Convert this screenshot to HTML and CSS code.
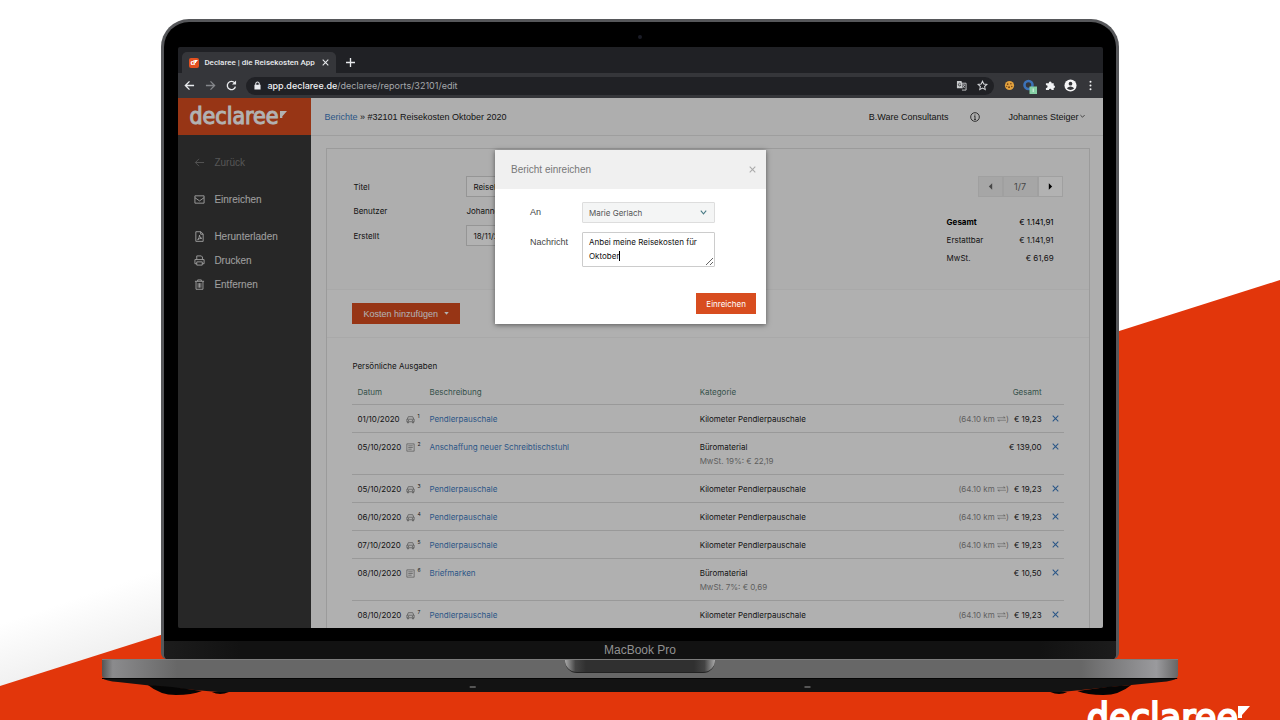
FILE: index.html
```html
<!DOCTYPE html>
<html lang="de">
<head>
<meta charset="utf-8">
<title>Declaree | die Reisekosten App</title>
<link rel="stylesheet" href="styles.css">
</head>
<body>
<svg width="0" height="0" class="defs" aria-hidden="true">
  <symbol id="car" viewBox="0 0 16 14"><g fill="none" stroke="currentColor" stroke-width="1.3"><path d="M2.2 6.5 4 2h8l1.800 4.500M1.500 6.500h13v4.500h-13zM2.500 11v2h2v-2M11.500 11v2h2v-2"/><path d="M3.500 8.700h2M10.500 8.700h2"/></g></symbol>
  <symbol id="note" viewBox="0 0 16 16"><path d="M1.500 1.500h13v13h-13zM4 5h8M4 8h8M4 11h6" fill="none" stroke="currentColor" stroke-width="1.200"/></symbol>
  <symbol id="swap" viewBox="0 0 18 12"><path d="M0 3.500h16M13 1l3.500 2.500H13M18 8.500H2M5 11 1.500 8.500H5" fill="none" stroke="currentColor" stroke-width="1.200"/></symbol>
  <symbol id="cross" viewBox="0 0 10 10"><path d="m1 1 8 8M9 1 1 9" fill="none" stroke="currentColor" stroke-width="1.500"/></symbol>
  <symbol id="flag" viewBox="0 0 12 12"><path d="M0 0h12L4 9v3H0z" fill="currentColor"/></symbol>
</svg>
<div class="stage">
  <svg class="backdrop" viewBox="0 0 1280 720" preserveAspectRatio="none" aria-hidden="true">
    <defs>
      <linearGradient id="haze" gradientUnits="userSpaceOnUse" x1="70" y1="600" x2="92" y2="665"><stop offset="0" stop-color="#fff"/><stop offset="1" stop-color="#efefef"/></linearGradient>
    </defs>
    <path d="M0 540 300 540V600L0 690z" fill="url(#haze)"/>
    <path d="M0 686 1280 280V720H0z" fill="#e2360b"/>
  </svg>
  <div class="laptop">
    <div class="lid">
      <div class="bezel"><span class="camera"></span></div>
      <div class="screen">
        <div class="tabs">
          <div class="tab">
            <span class="favicon">d<svg><use href="#flag"/></svg></span>
            <span class="tab-title">Declaree | die Reisekosten App</span>
            <button class="plain" aria-label="Tab schließen"><svg class="i7"><use href="#cross"/></svg></button>
          </div>
          <button class="plain new-tab" aria-label="Neuer Tab"><svg class="i9" viewBox="0 0 10 10"><path d="M5 0v10M0 5h10" stroke="currentColor" stroke-width="1.500"/></svg></button>
        </div>
        <div class="toolbar">
          <button class="plain" aria-label="Zurück"><svg class="i11" viewBox="0 0 12 12"><path d="M11 6H1.500M6 1.500 1.500 6 6 10.500" fill="none" stroke="currentColor" stroke-width="1.500"/></svg></button>
          <button class="plain dim" aria-label="Vorwärts"><svg class="i11" viewBox="0 0 12 12"><path d="M1 6h9.500M6 1.500 10.500 6 6 10.500" fill="none" stroke="currentColor" stroke-width="1.400"/></svg></button>
          <button class="plain" aria-label="Neu laden"><svg class="i11" viewBox="0 0 12 12"><path d="M10.300 7.200A4.500 4.500 0 1 1 9.500 3.200" fill="none" stroke="currentColor" stroke-width="1.500"/><path d="M11 .5v4.500H6.500z" fill="currentColor"/></svg></button>
          <div class="address">
            <svg class="lock" viewBox="0 0 8 10"><path d="M2 4.500V3a2 2 0 0 1 4 0v1.500" fill="none" stroke="currentColor" stroke-width="1.200"/><path d="M.5 4h7v5.500h-7z" fill="currentColor"/></svg>
            <span class="url"><b>app.declaree.de</b>/declaree/reports/32101/edit</span>
            <svg class="i11" viewBox="0 0 12 12"><path d="M1 1h5l1 3.500V9H1z" fill="#c8cacd"/><path d="M5.500 3.500H11V11H6.500" fill="none" stroke="#c8cacd"/><path d="M7 5.500h3M8.500 4.800v.7M9.500 5.500 7 9M7.500 6.500 9.800 9" stroke="#c8cacd" stroke-width=".8"/><path d="M5 4A1.500 1.500 0 1 0 5.400 5.500H4" fill="none" stroke="#303134" stroke-width=".8"/></svg>
            <svg class="i11" viewBox="0 0 12 12"><path d="m6 1.300 1.400 3.100 3.400.4-2.500 2.300.7 3.400-3-1.700-3 1.700.7-3.400L1.200 4.800l3.400-.4z" fill="none" stroke="#d5d7da" stroke-width="1.100"/></svg>
          </div>
          <div class="extensions">
            <svg class="i11" viewBox="0 0 12 12"><circle cx="6" cy="6" r="5" fill="#e2a23e"/><g fill="#6f3c13"><circle cx="4" cy="4.500" r=".9"/><circle cx="7.500" cy="4" r=".8"/><circle cx="8.500" cy="7" r=".8"/><circle cx="5.500" cy="7.800" r="1"/><circle cx="3" cy="7" r=".6"/></g></svg>
            <svg class="donut" viewBox="0 0 14 16"><circle cx="5.500" cy="7" r="4" fill="none" stroke="#3c72b8" stroke-width="2.600"/><path d="M6.500 8.500H14V16H6.500z" fill="#86cfa5"/><path d="M10.200 10.500v3.500" stroke="#dff5e8"/></svg>
            <svg class="i11" viewBox="0 0 12 12"><path d="M1 3.500h3.200a1.500 1.500 0 1 1 2.900 0H9.500v2.400a1.400 1.400 0 1 1 0 2.800V11H7.100a1.400 1.400 0 1 0-2.800 0H1V8.500a1.400 1.400 0 1 0 0-2.700z" fill="#f1f2f4"/></svg>
            <svg class="i13" viewBox="0 0 14 14"><circle cx="7" cy="7" r="6.500" fill="#f5f5f6"/><circle cx="7" cy="5" r="2" fill="#35363a"/><path d="M3 10q4-4 8 0-4 3.500-8 0" fill="#35363a"/></svg>
            <svg class="i11" viewBox="0 0 12 12"><g fill="#f1f2f4"><circle cx="6" cy="2" r="1.100"/><circle cx="6" cy="6" r="1.100"/><circle cx="6" cy="10" r="1.100"/></g></svg>
          </div>
        </div>
        <div class="site">
          <aside class="sidebar">
            <a class="brand" href="#">declaree<svg><use href="#flag"/></svg></a>
            <nav>
              <a class="muted gap" href="#"><svg viewBox="0 0 12 12"><path d="M11 6H1.500M5.500 2 1.500 6l4 4"/></svg>Zurück</a>
              <a class="gap" href="#"><svg viewBox="0 0 12 12"><path d="M1 2h10v8H1zM1 4l5 3.500L11 4"/></svg>Einreichen</a>
              <a href="#"><svg viewBox="0 0 12 12"><path d="M2 .8h5.500L10 3.300v8H2zM7.300.8v2.700H10M4 9.500q2-2 2-5 0 3 2.500 3.500Q6 8 4 9.500"/></svg>Herunterladen</a>
              <a href="#"><svg viewBox="0 0 12 12"><path d="M3 5V1h5l1.200 1.200V5M3 9.500H1V5h10v4.500H9M3 7.500h6V11H3z"/></svg>Drucken</a>
              <a href="#"><svg viewBox="0 0 12 12"><path d="M1 2.500h10M4 2.500V1h4v1.500M2.200 2.500v8.700h7.600V2.500M4.500 4.500v5M6 4.500v5M7.500 4.500v5"/></svg>Entfernen</a>
            </nav>
          </aside>
          <main class="main">
            <header class="topbar">
              <div class="crumbs"><a href="#">Berichte</a> » #32101 Reisekosten Oktober 2020</div>
              <span>B.Ware Consultants</span>
              <svg class="info" viewBox="0 0 12 12"><circle cx="6" cy="6" r="5.200" fill="none" stroke="currentColor"/><path d="M6 5v4M6 3v1.200M5 5h1M5 9h2" stroke="currentColor"/></svg>
              <span class="user">Johannes Steiger<svg class="i7" viewBox="0 0 10 10"><path d="m2 3 3 3 3-3" fill="none" stroke="currentColor"/></svg></span>
            </header>
            <section class="card">
              <div class="details">
                <div class="form">
                  <label for="titel">Titel</label><input id="titel" value="Reisekosten Oktober 2020">
                  <span>Benutzer</span><span>Johannes Steiger</span>
                  <label for="erstellt">Erstellt</label><input id="erstellt" value="18/11/2020">
                </div>
                <div class="totals">
                  <div class="pager"><button aria-label="Vorherige"><svg viewBox="0 0 6 8"><path d="M5 0v8L1 4z"/></svg></button><span>1/7</span><button class="on" aria-label="Nächste"><svg viewBox="0 0 6 8"><path d="M1 0v8l4-4z"/></svg></button></div>
                  <dl>
                    <div class="strong"><dt>Gesamt</dt><dd>€ 1.141,91</dd></div>
                    <div><dt>Erstattbar</dt><dd>€ 1.141,91</dd></div>
                    <div><dt>MwSt.</dt><dd>€ 61,69</dd></div>
                  </dl>
                </div>
              </div>
              <div class="actions"><button class="primary add">Kosten hinzufügen<svg viewBox="0 0 6 4"><path d="M0 0h6L3 3.500z" fill="currentColor"/></svg></button></div>
              <div class="expenses">
                <h2>Persönliche Ausgaben</h2>
                <table>
                  <colgroup><col class="c-date"><col class="c-desc"><col><col class="c-sum"><col class="c-del"></colgroup>
                  <thead><tr><th>Datum</th><th>Beschreibung</th><th>Kategorie</th><th class="num">Gesamt</th><th></th></tr></thead>
                  <tbody>
                    <tr><td><span class="date">01/10/2020</span><svg class="kind"><use href="#car"/></svg><sup>1</sup></td><td><a href="#">Pendlerpauschale</a></td><td>Kilometer Pendlerpauschale</td><td class="num"><span class="km">(64.10 km <svg><use href="#swap"/></svg>)</span>€ 19,23</td><td class="del"><button class="plain" aria-label="Löschen"><svg class="i7"><use href="#cross"/></svg></button></td></tr>
                    <tr><td><span class="date">05/10/2020</span><svg class="kind"><use href="#note"/></svg><sup>2</sup></td><td><a href="#">Anschaffung neuer Schreibtischstuhl</a></td><td>Büromaterial<div class="vat">MwSt. 19%: € 22,19</div></td><td class="num">€ 139,00</td><td class="del"><button class="plain" aria-label="Löschen"><svg class="i7"><use href="#cross"/></svg></button></td></tr>
                    <tr><td><span class="date">05/10/2020</span><svg class="kind"><use href="#car"/></svg><sup>3</sup></td><td><a href="#">Pendlerpauschale</a></td><td>Kilometer Pendlerpauschale</td><td class="num"><span class="km">(64.10 km <svg><use href="#swap"/></svg>)</span>€ 19,23</td><td class="del"><button class="plain" aria-label="Löschen"><svg class="i7"><use href="#cross"/></svg></button></td></tr>
                    <tr><td><span class="date">06/10/2020</span><svg class="kind"><use href="#car"/></svg><sup>4</sup></td><td><a href="#">Pendlerpauschale</a></td><td>Kilometer Pendlerpauschale</td><td class="num"><span class="km">(64.10 km <svg><use href="#swap"/></svg>)</span>€ 19,23</td><td class="del"><button class="plain" aria-label="Löschen"><svg class="i7"><use href="#cross"/></svg></button></td></tr>
                    <tr><td><span class="date">07/10/2020</span><svg class="kind"><use href="#car"/></svg><sup>5</sup></td><td><a href="#">Pendlerpauschale</a></td><td>Kilometer Pendlerpauschale</td><td class="num"><span class="km">(64.10 km <svg><use href="#swap"/></svg>)</span>€ 19,23</td><td class="del"><button class="plain" aria-label="Löschen"><svg class="i7"><use href="#cross"/></svg></button></td></tr>
                    <tr><td><span class="date">08/10/2020</span><svg class="kind"><use href="#note"/></svg><sup>6</sup></td><td><a href="#">Briefmarken</a></td><td>Büromaterial<div class="vat">MwSt. 7%: € 0,69</div></td><td class="num">€ 10,50</td><td class="del"><button class="plain" aria-label="Löschen"><svg class="i7"><use href="#cross"/></svg></button></td></tr>
                    <tr><td><span class="date">08/10/2020</span><svg class="kind"><use href="#car"/></svg><sup>7</sup></td><td><a href="#">Pendlerpauschale</a></td><td>Kilometer Pendlerpauschale</td><td class="num"><span class="km">(64.10 km <svg><use href="#swap"/></svg>)</span>€ 19,23</td><td class="del"><button class="plain" aria-label="Löschen"><svg class="i7"><use href="#cross"/></svg></button></td></tr>
                  </tbody>
                </table>
              </div>
            </section>
          </main>
          <div class="overlay">
            <form class="modal" role="dialog" aria-labelledby="modal-title">
              <header><h1 id="modal-title">Bericht einreichen</h1><button type="button" class="plain close" aria-label="Schließen"><svg class="i7"><use href="#cross"/></svg></button></header>
              <div class="fields">
                <label for="an">An</label>
                <div class="select"><select id="an"><option>Marie Gerlach</option></select><svg viewBox="0 0 10 10"><path d="m2 3 3 3.500L8 3" fill="none" stroke="currentColor" stroke-width="1.200"/></svg></div>
                <label for="nachricht">Nachricht</label>
                <div class="message"><textarea id="nachricht">Anbei meine Reisekosten für
Oktober</textarea><span class="caret"></span></div>
              </div>
              <footer><button type="button" class="primary">Einreichen</button></footer>
            </form>
          </div>
        </div>
      </div>
      <div class="glass"></div>
      <div class="chin">MacBook Pro</div>
    </div>
    <div class="base"><div class="notch"></div></div>
    <svg class="underside" viewBox="0 0 1076 18" preserveAspectRatio="none" aria-hidden="true">
      <path d="M0 0H1076Q1072 3 1060 4L1000 10 960 14H116L70 10 16 4Q4 3 0 0z" fill="#131313"/>
      <path d="M46 7Q58 17 74 17T100 13L70 9zM110 14q8 4 17 0zM1030 7q-12 10-28 10t-26-4L1006 9zM966 14q-8 4-17 0z" fill="#050505"/>
      <path d="M0 0H1076V1H0z" fill="#050505"/>
      <path d="M368 9h6M703 9h6" stroke="#999"/>
    </svg>
  </div>
  <div class="wordmark">declaree<svg><use href="#flag"/></svg></div>
</div>
</body>
</html>
```
FILE: styles.css
```css
* { box-sizing: border-box; }
body { margin: 0; background: #fff; font-family: "Liberation Sans", Arial, sans-serif; font-size: 9px; line-height: 14px; color: #222; }
button, input, select, textarea { font: inherit; color: inherit; margin: 0; }
a { color: #3d7cc2; text-decoration: none; }
h1, h2, dl, dd { margin: 0; font-weight: 400; }
svg { display: block; flex: none; }
.defs { position: absolute; }
.plain { display: flex; padding: 0; border: 0; background: none; }
.i7 { width: 7px; height: 7px; }
.i9 { width: 9px; height: 9px; }
.i11 { width: 11px; height: 11px; }
.i13 { width: 13px; height: 13px; }

.stage { position: relative; height: 100vh; min-height: 480px; overflow: hidden; }
.backdrop { position: absolute; inset: 0; width: 100%; height: 100%; }
.laptop { position: relative; display: flex; flex-direction: column; height: 100%; padding: 19px 8% 24px; }
.lid { flex: 1; min-height: 0; margin: 0 59px; display: flex; flex-direction: column; background: #000; border: 3px solid #56575a; border-bottom: 0; border-radius: 28px 28px 6px 6px; overflow: hidden; }
.bezel { flex: none; height: 25px; display: flex; align-items: center; justify-content: center; padding-top: 4px; }
.camera { width: 4px; height: 4px; border-radius: 50%; background: #1a1c26; }
.screen { flex: 1; min-height: 0; margin: 0 13px 0 14px; display: flex; flex-direction: column; overflow: hidden; border-radius: 2px; }
.glass { flex: none; height: 13px; }
.chin { flex: none; height: 18px; background: linear-gradient(90deg, #1c1c1c, #121212 8%, #121212 92%, #1c1c1c); color: #919191; font-size: 12px; line-height: 18px; text-align: center; }
.base { flex: none; height: 19px; display: flex; justify-content: center; background: linear-gradient(90deg, #555 0, #8b8b8d 1%, #676767 7%, #676767 91%, #9a9a9d 98%, #666 100%); border-top: 1px solid #7d7d7d; border-radius: 0 0 3px 3px; }
.notch { width: 150px; height: 13px; border-radius: 0 0 12px 12px; background: linear-gradient(90deg, #aaa 0, #444 7%, #303030 14%, #303030 86%, #444 93%, #aaa 100%); border-bottom: 1px solid #222; }
.underside { flex: none; width: 100%; height: 18px; }
.wordmark { position: absolute; right: 30px; top: calc(100% - 22px); display: flex; color: #fff; font: 39px/40px "DejaVu Sans Condensed", "DejaVu Sans", sans-serif; -webkit-text-stroke: 2px #fff; }
.wordmark svg { width: 12px; height: 12px; margin-top: 8px; }

.tabs { flex: none; height: 26px; display: flex; align-items: flex-end; gap: 10px; padding-left: 4px; background: #202125; color: #e8eaed; }
.tab { width: 154px; height: 21px; display: flex; align-items: center; gap: 5px; padding: 0 7px; background: #35363a; border-radius: 5px 5px 0 0; }
.tab-title { flex: 1; white-space: nowrap; font: 500 8px/14px Roboto, sans-serif; }
.favicon { width: 10px; height: 10px; display: flex; justify-content: center; background: #e2501f; border-radius: 2px; color: #fff; font-size: 8px; font-weight: 700; line-height: 10px; }
.favicon svg { width: 3px; height: 3px; margin-top: 2px; }
.new-tab { height: 21px; align-items: center; }
.toolbar { flex: none; height: 25px; display: flex; align-items: center; gap: 10px; padding: 0 7px 0 6px; background: #35363a; color: #e8eaed; }
.dim { color: #85878b; }
.address { flex: 1; min-width: 0; height: 18px; display: flex; align-items: center; gap: 10px; margin-left: -1px; padding: 0 6px 0 8px; border-radius: 9px; background: #202125; }
.lock { width: 7px; height: 9px; margin-right: -4px; }
.url { flex: 1; font: 9px/14px Inter, sans-serif; color: #a5a8ac; }
.url b { font-weight: 500; color: #f1f2f4; }
.extensions { display: flex; align-items: center; gap: 8px; }
.donut { width: 14px; height: 16px; }

.site { flex: 1; min-height: 0; position: relative; display: flex; overflow: hidden; }
.sidebar { flex: none; width: 133px; background: #383838; }
.brand { height: 37px; display: flex; padding-left: 11px; background: #d84d1f; color: #fff; font: 23px/37px "DejaVu Sans Condensed", "DejaVu Sans", sans-serif; -webkit-text-stroke: 1px #fff; }
.brand svg { width: 7px; height: 7px; margin: 13px 0 0 1px; }
.sidebar nav { display: flex; flex-direction: column; padding: 16px 16px 0; font-size: 10px; }
.sidebar nav a { height: 24px; display: flex; align-items: center; gap: 9px; color: #e6e6e6; }
.sidebar nav a.gap { margin-bottom: 13px; }
.sidebar nav a.muted { color: #7c7c7c; }
.sidebar nav svg { width: 11px; height: 11px; margin-bottom: 1px; fill: none; stroke: currentColor; }
.main { flex: 1; min-width: 0; background: #f9f9f9; }
.topbar { height: 38px; display: flex; align-items: center; padding: 0 17px 0 13px; border-bottom: 1px solid #e2e2e2; }
.crumbs { flex: 1; }
.info { width: 10px; height: 10px; margin: 0 29px 0 21px; }
.user { display: flex; align-items: center; }
.card { margin: 12px 13px 0 15px; border: 1px solid #dedede; background: #fdfdfd; }
.details { display: flex; justify-content: space-between; padding: 27px 26px 20px; min-height: 141px; background: #f9f9f9; border-bottom: 1px solid #f2f2f2; font-family: Inter, sans-serif; font-size: 8px; }
.form { display: grid; grid-template-columns: 113px 190px; grid-template-rows: 21px 28px 21px; align-items: center; align-content: start; }
.form input { height: 21px; padding: 0 6px; border: 1px solid #d6d6d6; background: #fff; }
.pager { display: flex; justify-content: flex-end; height: 21px; margin-bottom: 16px; text-align: center; font-size: 9px; line-height: 20px; color: #666; }
.pager > * { width: 35px; border: 1px solid #e6e6e6; background: #eee; }
.pager button { width: 25px; display: flex; align-items: center; justify-content: center; padding: 0; }
.pager .on { background: #fff; color: #000; }
.pager svg { width: 5px; height: 7px; fill: currentColor; }
.totals { width: 116px; }
.totals dl { padding-right: 9px; }
.totals dl div { display: flex; justify-content: space-between; line-height: 18px; }
.totals .strong { font-weight: 700; color: #000; }
.primary { height: 21px; padding: 0 10px; border: 0; background: #d84d1f; color: #fff; font: 8px Inter, sans-serif; }
.actions { height: 48px; padding: 13px 25px; border-bottom: 1px solid #f2f2f2; }
.add { display: flex; align-items: center; gap: 6px; padding: 0 11px; font: 9px "Liberation Sans", Arial, sans-serif; }
.add svg { width: 5px; height: 3px; }
.expenses { padding: 21px 25px 0; font-family: Inter, sans-serif; font-size: 8px; }
.expenses h2 { font-size: 8px; }
table { width: 100%; table-layout: fixed; border-collapse: separate; border-spacing: 0; }
.c-date { width: 72px; }
.c-desc { width: 38%; }
.c-sum { width: 120px; }
.c-del { width: 17px; }
th, td { padding: 7px 5px 6px; border-bottom: 1px solid #dcdcdc; vertical-align: top; text-align: left; font-weight: 400; white-space: nowrap; }
th { padding-top: 12px; padding-bottom: 5px; color: #4e766c; }
.date { display: inline-block; width: 49px; }
.kind { display: inline-block; width: 9px; height: 9px; color: #777; vertical-align: middle; }
sup { margin-left: 2px; font-size: 5px; line-height: 5px; }
.num { text-align: right; }
.km { margin-right: 5px; color: #8a8a8a; }
.km svg { display: inline-block; width: 9px; height: 6px; }
.vat { color: #888; }
td.del { padding: 10px 0 0 5px; color: #3d7cc2; }

.overlay { position: absolute; inset: 0; display: flex; justify-content: center; align-items: flex-start; padding: 52px 20px 0 0; background: rgba(0, 0, 0, .3); }
.modal { width: 271px; background: #fff; box-shadow: 0 1px 5px rgba(0, 0, 0, .5); }
.modal header { height: 39px; display: flex; align-items: center; justify-content: space-between; padding: 0 10px 0 16px; background: #f0f0f0; color: #777; }
.modal h1 { font-size: 10px; }
.close { color: #aaa; }
.fields { display: grid; grid-template-columns: 52px 133px; row-gap: 9px; padding: 13px 35px 0; font-size: 9px; line-height: 20px; color: #444; }
.select { position: relative; }
.select select { display: block; width: 100%; height: 21px; padding: 0 6px; appearance: none; border: 1px solid #ddd; border-radius: 1px; background: #f4f5f5; font: 8px Inter, sans-serif; color: #555; }
.select svg { position: absolute; right: 7px; top: 6px; width: 9px; height: 9px; color: #4a7c86; pointer-events: none; }
.message { position: relative; height: 35px; }
.message textarea { display: block; width: 100%; height: 35px; padding: 2px 6px; border: 1px solid #ccc; border-radius: 1px; font: 8px/14px Inter, sans-serif; color: #111; overflow: hidden; }
.caret { position: absolute; left: 37px; top: 19px; width: 1px; height: 10px; background: #000; }
.modal footer { display: flex; justify-content: flex-end; padding: 26px 10px 10px; }
```
